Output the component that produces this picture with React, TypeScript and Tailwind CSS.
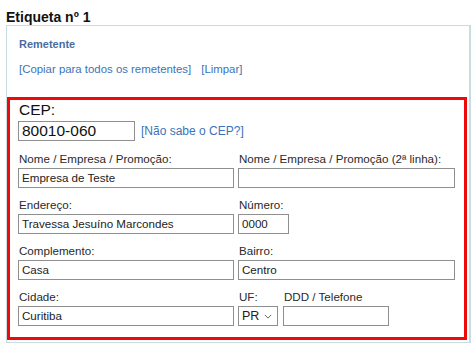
import React from "react";

const Label = ({ children }: { children: React.ReactNode }) => (
  <div className="text-[11.6px] leading-[14px] text-[#2a2a2a] pl-[1px] mb-[2px] whitespace-nowrap">
    {children}
  </div>
);

const Field = ({ value = "", className = "" }: { value?: string; className?: string }) => (
  <div
    className={`h-[20px] border border-[#8f8f8f] bg-white px-[3px] text-[11.6px] leading-[18px] text-[#222] ${className}`}
  >
    {value}
  </div>
);

function ChevronDown(props: any) {
  return (
    <svg {...props} viewBox="0 0 10 6" fill="none" stroke="currentColor" strokeWidth="1.1">
      <path d="M1 1l4 4 4-4" />
    </svg>
  );
}

export default function App() {
  return (
    <div className="w-[474px] h-[348px] bg-white font-['Liberation_Sans',Arial,sans-serif] overflow-hidden">
      <div className="pl-[6px] pt-[9px] text-[14px] leading-[16px] font-bold text-[#111]">
        Etiqueta nº 1
      </div>

      <div className="ml-[6px] w-[465px] h-[318px] border border-[#c9dcdf] border-r-2">
        <div className="h-[71px] pl-[12px] pt-[12px]">
          <div className="text-[11px] leading-[13px] font-bold text-[#4b6c9e]">Remetente</div>
          <div className="mt-[11px] text-[11.4px] leading-[14px] text-[#3b73b9] whitespace-nowrap">
            <span>[Copiar para todos os remetentes]</span>
            <span className="ml-[10px]">[Limpar]</span>
          </div>
        </div>

        <div className="w-[460px] h-[243px] border-[3px] border-[#ee0a0a] pl-[8px]">
          <div className="text-[15.5px] leading-[18px] text-[#111] pl-[1px] pt-[1px]">CEP:</div>
          <div className="mt-[2px] flex items-center">
            <div className="w-[117px] h-[20px] border border-[#8f8f8f] px-[3px] text-[15.5px] leading-[18px] text-[#111]">
              80010-060
            </div>
            <span className="ml-[6px] text-[12px] text-[#3b73b9]">[Não sabe o CEP?]</span>
          </div>

          <div className="mt-[11px] flex flex-col gap-[10px]">
            <div className="flex gap-[4px]">
              <div className="w-[216px]">
                <Label>Nome / Empresa / Promoção:</Label>
                <Field value="Empresa de Teste" />
              </div>
              <div className="w-[217px]">
                <Label>Nome / Empresa / Promoção (2ª linha):</Label>
                <Field />
              </div>
            </div>

            <div className="flex gap-[4px]">
              <div className="w-[216px]">
                <Label>Endereço:</Label>
                <Field value="Travessa Jesuíno Marcondes" />
              </div>
              <div className="w-[217px]">
                <Label>Número:</Label>
                <Field value="0000" className="w-[51px]" />
              </div>
            </div>

            <div className="flex gap-[4px]">
              <div className="w-[216px]">
                <Label>Complemento:</Label>
                <Field value="Casa" />
              </div>
              <div className="w-[217px]">
                <Label>Bairro:</Label>
                <Field value="Centro" />
              </div>
            </div>

            <div className="flex gap-[4px]">
              <div className="w-[216px]">
                <Label>Cidade:</Label>
                <Field value="Curitiba" />
              </div>
              <div className="w-[40px]">
                <Label>UF:</Label>
                <div className="h-[20px] border border-[#8f8f8f] pl-[3px] pr-[5px] flex items-center justify-between text-[12.5px] text-[#222]">
                  <span>PR</span>
                  <ChevronDown className="w-[8px] h-[5px] text-[#555]" />
                </div>
              </div>
              <div className="w-[106px] ml-[1px]">
                <Label>DDD / Telefone</Label>
                <Field />
              </div>
            </div>
          </div>
        </div>
      </div>
    </div>
  );
}
